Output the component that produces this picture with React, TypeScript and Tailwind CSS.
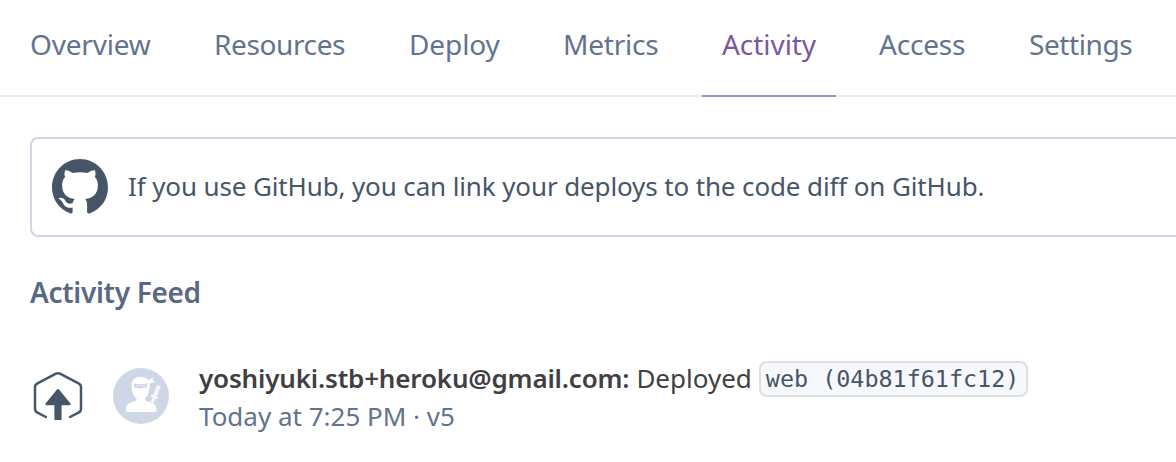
import React from 'react';

interface Tab {
  label: string;
  width: string;
  spacing: string;
}

const tabs: Tab[] = [
  { label: 'Overview', width: 'w-[160px]', spacing: 'tracking-[-0.2px]' },
  { label: 'Resources', width: 'w-[171px]', spacing: 'tracking-[-0.38px]' },
  { label: 'Deploy', width: 'w-[130px]', spacing: 'tracking-[-0.1px]' },
  { label: 'Metrics', width: 'w-[135px]', spacing: 'tracking-[-0.2px]' },
  { label: 'Activity', width: 'w-[134px]', spacing: 'tracking-[-0.05px]' },
  { label: 'Access', width: 'w-[125px] -ml-px mr-px', spacing: 'tracking-[-0.2px]' },
  { label: 'Settings', width: 'w-[144px]', spacing: 'tracking-[-0.4px]' }
];

const GitHubMark: React.FC = () => (
  <svg className="w-14 h-14 shrink-0" viewBox="0 0 56 56">
    <path
      fill="#475569"
      d="M28 0C12.500 0 0 12.700 0 28.400C0 40.500 7.500 50.300 18 54.200Q20.600 54.900 20.600 53V48.600C13.500 49.600 12 46 10.500 43.200C9.500 41.200 6.700 40.200 6.700 39.300C9.500 38.100 12 39.500 13.500 42C15.300 45.100 17.600 45.100 20.800 44C21 42.300 21.800 40.700 22.800 40C16 39.200 10.100 36 10.100 26C10.100 22.600 11.300 20 13.100 18C12.500 16.500 12 14 13.200 11.200C16 11 19 13 20.800 14.100C25.500 13 30.500 13 35.200 14.100C37 13 40 11 42.800 11.200C44 14 43.500 16.500 42.900 18C44.700 20 45.900 22.600 45.900 26C45.900 36 40 39.200 33.200 40C34.500 41.400 35.100 43.500 35.100 46V53Q35.100 54.900 38 54.200C48.500 50.300 56 40.500 56 28.400C56 12.700 43.500 0 28 0Z"
    />
  </svg>
);

const DeployIcon: React.FC = () => (
  <svg className="w-[50px] h-[50px] shrink-0" viewBox="0 0 50 50">
    <path
      d="M13 46L4 41.300Q2 40.200 2 38V16Q2 13.800 4 12.700L23 2.700Q25 1.600 27 2.700L46 12.700Q48 13.800 48 16V38Q48 40.200 46 41.300L37 46"
      fill="none"
      stroke="#475569"
      strokeWidth="2.500"
      strokeLinecap="round"
    />
    <path d="M24 18.500Q25 17.500 26 18.500L37.500 32.500Q38 34.200 36.500 34.200H28.600V49H21.400V34.200H13.500Q12 34.200 12.500 32.500Z" fill="#475569" />
  </svg>
);

const NinjaAvatar: React.FC = () => (
  <svg className="w-14 h-14 shrink-0" viewBox="0 0 56 56">
    <circle cx="28" cy="28" r="28" fill="#cfd7e6" />
    <g fill="#fff">
      <path d="M18.500 18C18.500 12 22 8.800 27.500 8.800C31 8.800 33.500 10 35 12L41 9.500L39.500 12.300L42.500 14L36.700 15.600C37.200 21 35.500 27.500 32 30.500V32.500L40 35.200C42.700 36.200 43.500 39 43.500 42.500Q43.500 44 42 44H14.500Q13 44 13 42.500C13 38.500 13.800 36 17 35L23.500 32.500V30.500C20 27.500 18.500 23 18.500 18Z" />
      <path opacity="0.8" d="M44.200 16.800L47.800 18.300L43.600 28.500L45.200 29.500L44.300 31.200L42.500 30.500L40.300 35L37.500 33.700L39.500 29.200L37.700 28.300L38.400 26.600L40 27.200Z" />
    </g>
    <path d="M20.800 15.300Q27.500 17 34.300 15.300Q34.500 18 33.500 19.500Q27.500 21 21.800 19.500Q20.800 18 20.800 15.300Z" fill="#cfd7e6" />
    <path d="M23.300 17.800H26M29.400 17.800H32" stroke="#eef1f7" strokeWidth="1.300" />
  </svg>
);

const App: React.FC = () => {
  return (
    <main className="h-[462px] overflow-hidden bg-white font-['Noto_Sans',sans-serif]">
      <nav className="flex gap-6 h-[97px] pl-2.5 border-b-2 border-[#e7eaf5]">
        {tabs.map((tab) => (
          <a
            key={tab.label}
            className={`${tab.width} ${tab.spacing} h-[97px] shrink-0 px-5 pt-6 text-[28px] leading-10 whitespace-nowrap border-b-2 ${
              tab.label === 'Activity' ? 'text-[#79589f] border-[#a892c4]' : 'text-[#62738f] border-transparent'
            }`}
          >
            {tab.label}
          </a>
        ))}
      </nav>

      <section className="flex items-center mt-10 ml-[30px] h-[100px] pl-5 border-2 border-r-0 border-[#cfd7e6] rounded-l-lg">
        <GitHubMark />
        <p className="ml-5 pb-0.5 text-[26px] leading-9 tracking-[-0.125px] text-[#475569] whitespace-nowrap">
          If you use GitHub, you can link your deploys to the code diff on GitHub.
        </p>
      </section>

      <h2 className="mt-[35px] ml-[30px] text-[28px] leading-10 font-semibold tracking-[-0.3px] text-[#596981]">Activity Feed</h2>

      <article className="flex mt-[47px] ml-[33px] whitespace-nowrap">
        <div className="pt-3">
          <DeployIcon />
        </div>
        <div className="ml-[30px] pt-[9px]">
          <NinjaAvatar />
        </div>
        <div className="ml-[30px] text-[26px]">
          <div className="flex items-center h-10 text-[#3f3f44]">
            <strong className="pb-0.5 font-semibold tracking-[-0.17px]">yoshiyuki.stb+heroku@gmail.com:</strong>
            <span className="ml-[7px] pb-0.5">Deployed</span>
            <code className="ml-[7px] h-9 w-[269px] px-[5px] border-2 border-[#dddfe6] rounded-lg bg-[#f7f8fc] font-['DejaVu_Sans_Mono',monospace] text-[23.4px] leading-8 text-[#475569]">
              web (04b81f61fc12)
            </code>
          </div>
          <p className="-mt-px leading-9 text-[#62738f]">Today at 7:25 PM · v5</p>
        </div>
      </article>
    </main>
  );
};

export default App;
